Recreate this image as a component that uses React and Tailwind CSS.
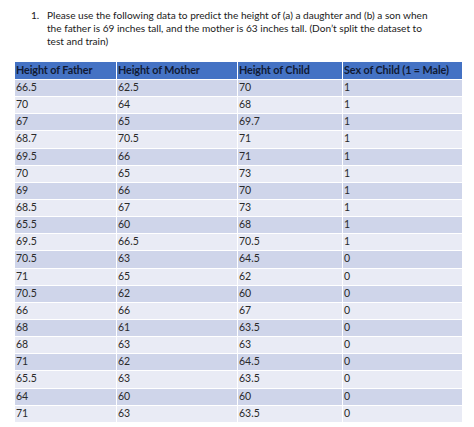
const rows = [
  ["66.5", "62.5", "70", "1"],
  ["70", "64", "68", "1"],
  ["67", "65", "69.7", "1"],
  ["68.7", "70.5", "71", "1"],
  ["69.5", "66", "71", "1"],
  ["70", "65", "73", "1"],
  ["69", "66", "70", "1"],
  ["68.5", "67", "73", "1"],
  ["65.5", "60", "68", "1"],
  ["69.5", "66.5", "70.5", "1"],
  ["70.5", "63", "64.5", "0"],
  ["71", "65", "62", "0"],
  ["70.5", "62", "60", "0"],
  ["66", "66", "67", "0"],
  ["68", "61", "63.5", "0"],
  ["68", "63", "63", "0"],
  ["71", "62", "64.5", "0"],
  ["65.5", "63", "63.5", "0"],
  ["64", "60", "60", "0"],
  ["71", "63", "63.5", "0"],
];

const headers = ["Height of Father", "Height of Mother", "Height of Child", "Sex of Child (1 = Male)"];

export default function App() {
  return (
    <div className="w-[474px] h-[427px] bg-white overflow-hidden text-[#2a2a2a] font-['Lato','Open_Sans',sans-serif]">
      <div className="flex pt-[9px] pl-[31px] text-[10.1px] leading-[13px] text-[#1a1a1a]">
        <span className="w-[16px]">1.</span>
        <div className="whitespace-nowrap">
          <div>Please use the following data to predict the height of (a) a daughter and (b) a son when</div>
          <div>the father is 69 inches tall, and the mother is 63 inches tall. (Don’t split the dataset to</div>
          <div>test and train)</div>
        </div>
      </div>
      <div className="ml-[15px] mt-[14px] w-[447px] text-[10.5px]">
        <div className="grid grid-cols-[101px_121px_105px_120px] h-[17px] bg-[#4472c4] font-bold text-[10.8px] text-[#111a33]">
          {headers.map((h, i) => (
            <div key={i} className={`pl-[1px] flex items-end pb-[2px] whitespace-nowrap tracking-[-0.1px] ${i > 0 ? "border-l border-white" : ""}`}>{h}</div>
          ))}
        </div>
        {rows.map((r, ri) => (
          <div
            key={ri}
            className={`grid grid-cols-[101px_121px_105px_120px] h-[17.15px] border-t border-white ${ri % 2 === 0 ? "bg-[#cfd5ea]" : "bg-[#e9ebf5]"}`}
          >
            {r.map((c, ci) => (
              <div key={ci} className={`pl-[1px] flex items-end pb-[1px] ${ci > 0 ? "border-l border-white" : ""}`}>{c}</div>
            ))}
          </div>
        ))}
      </div>
    </div>
  );
}
